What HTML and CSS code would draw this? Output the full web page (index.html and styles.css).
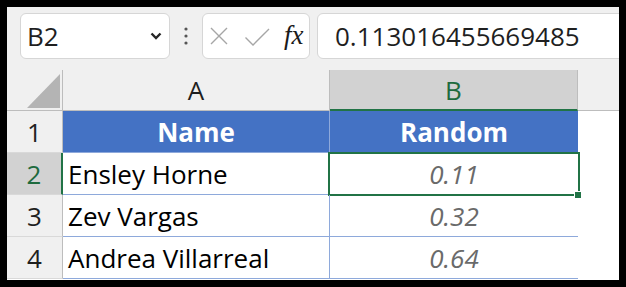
FILE: index.html
```html
<!DOCTYPE html>
<html lang="en">
<head>
  <meta charset="UTF-8" />
  <title>Sheet - Random</title>
  <link rel="stylesheet" href="styles.css">
</head>
<body>

<div class="frame">
  <!-- Formula bar -->
  <div class="toolbar">
    <div class="name-box">
      <span>B2</span>
      <svg class="chevron" width="12" height="8" viewBox="0 0 12 8"><path d="M1.5 1.5l4.5 4.5 4.5-4.5" fill="none" stroke="#262626" stroke-width="2.4"/></svg>
    </div>
    <svg class="dots" width="6" height="20" viewBox="0 0 6 20"><circle cx="3" cy="3" r="1.6" fill="#555"/><circle cx="3" cy="10" r="1.6" fill="#555"/><circle cx="3" cy="17" r="1.6" fill="#555"/></svg>
    <div class="fx-box">
      <svg class="icon-x" width="18" height="18" viewBox="0 0 18 18"><path d="M1 1l16 16M17 1L1 17" fill="none" stroke="#a6a6a6" stroke-width="1.4"/></svg>
      <svg class="icon-check" width="25" height="18" viewBox="0 0 25 18"><path d="M0.5 9.5l7.5 7.5L24 1" fill="none" stroke="#a6a6a6" stroke-width="1.4"/></svg>
      <span class="fx">fx</span>
    </div>
    <div class="formula">0.113016455669485</div>
  </div>

  <!-- Grid -->
  <div class="sheet">
    <div class="corner"><div class="tri"></div></div>
    <div class="col-head">A</div>
    <div class="col-head active">B</div>
    <div class="col-head rest"></div>

    <div class="row-head">1</div>
    <div class="cell head">Name</div>
    <div class="cell head num">Random</div>
    <div class="cell empty"></div>

    <div class="row-head active">2</div>
    <div class="cell">Ensley Horne</div>
    <div class="cell num selected">0.11
      <div class="selection"></div>
      <div class="handle"></div>
    </div>
    <div class="cell empty"></div>

    <div class="row-head">3</div>
    <div class="cell">Zev Vargas</div>
    <div class="cell num">0.32</div>
    <div class="cell empty"></div>

    <div class="row-head">4</div>
    <div class="cell">Andrea Villarreal</div>
    <div class="cell num">0.64</div>
    <div class="cell empty"></div>
  </div>
</div>

</body>
</html>
```

FILE: styles.css
```css
* { margin: 0; padding: 0; box-sizing: border-box; }
body {
  background: #000;
  font-family: 'Open Sans', 'Noto Sans', sans-serif;
  color: #000;
}
.frame {
  margin: 7px;
  width: 612px; height: 273px;
  background: #fff;
  overflow: hidden;
}

/* formula bar */
.toolbar {
  height: 63px;
  background: #f0f0f0;
  display: flex; align-items: flex-start;
  padding: 6px 0 0 13px;
  overflow: hidden;
}
.name-box, .fx-box, .formula {
  height: 46px;
  background: #fff;
  border: 1px solid #d6d6d6;
  border-radius: 6px;
  display: flex; align-items: center;
}
.name-box {
  width: 150px;
  padding: 0 7px 0 6px;
  justify-content: space-between;
  font-size: 26px; color: #1f1f1f;
}
.dots { margin: 13px 13px 0 13px; }
.fx-box {
  width: 108px;
  padding: 0 0 0 7px;
}
.icon-check { margin-left: 17px; margin-top: 2px; }
.fx {
  font-family: 'Liberation Serif', serif;
  font-style: italic;
  font-size: 27px;
  color: #1a1a1a;
  margin-left: 14px;
  margin-top: -2px;
}
.formula {
  flex: 1;
  margin: 0 -12px 0 7px;
  padding-left: 17px;
  font-size: 26px; color: #1f1f1f;
}

/* sheet grid */
.sheet {
  display: grid;
  grid-template-columns: 56px 267px 248px 1fr;
  grid-template-rows: 41px 42px 42px 42px 42px;
}
.corner {
  background: #f0f0f0;
  border-right: 1px solid #bdbdbd;
  border-bottom: 1px solid #bdbdbd;
  padding: 4px 3px 3px 20px;
}
.tri {
  width: 33px; height: 34px;
  background: #b4b4b4;
  clip-path: polygon(100% 0, 100% 100%, 0 100%);
}
.col-head {
  background: #f0f0f0;
  border-right: 1px solid #bdbdbd;
  border-bottom: 1px solid #bdbdbd;
  display: flex; align-items: center; justify-content: center;
  font-size: 26px; color: #1f1f1f;
}
.col-head.active {
  background: #d2d2d2;
  color: #1e6b3e;
  border-bottom: 2px solid #217346;
}
.col-head.rest { border-right: none; }
.row-head {
  background: #f0f0f0;
  border-right: 1px solid #bdbdbd;
  border-bottom: 1px solid #d9d9d9;
  display: flex; align-items: center; justify-content: center;
  font-size: 26px; color: #1f1f1f;
}
.row-head.active {
  background: #d2d2d2;
  color: #1e6b3e;
  border-right: 2px solid #217346;
}
.cell {
  position: relative;
  border-right: 1px solid #8ea9db;
  border-bottom: 1px solid #8ea9db;
  display: flex; align-items: center;
  padding-left: 5px;
  font-size: 26px;
}
.cell.head {
  background: #4472c4;
  color: #fff;
  font-weight: bold;
  justify-content: center;
  padding-left: 0;
}
.cell.num { justify-content: center; padding-left: 0; border-right: none; }
.cell.num:not(.head) { font-style: italic; color: #6a6a6a; }
.cell.empty { border: none; }
.selection {
  position: absolute;
  left: -2px; top: -1px; right: -2px; bottom: -2px;
  border: 2px solid #217346;
}
.handle {
  position: absolute;
  left: 244px; top: 38px;
  width: 8px; height: 8px;
  background: #217346;
  border: 1px solid #fff;
}
```
